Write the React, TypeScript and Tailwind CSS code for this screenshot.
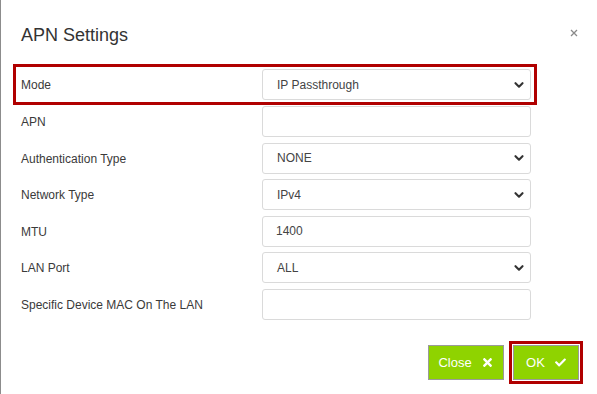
import { FaCheck, FaTimes } from "react-icons/fa";

const font = "font-['Liberation_Sans',Arial,sans-serif]";

function Chevron() {
  return (
    <svg width="10" height="6" viewBox="0 0 10 6" className="shrink-0">
      <path d="M1.5 1.2l3.5 3.5 3.5-3.5" fill="none" stroke="#333" strokeWidth="2.1" strokeLinecap="round" strokeLinejoin="round" />
    </svg>
  );
}

function SelectBox({ value }: { value: string }) {
  return (
    <div className="flex h-[31px] w-[269px] items-center justify-between rounded-[3px] border border-[#dadada] bg-white pl-[14px] pr-[6px] text-[12px] text-[#444]">
      <span>{value}</span>
      <Chevron />
    </div>
  );
}

function InputBox({ value = "" }: { value?: string }) {
  return (
    <div className="flex h-[31px] w-[269px] items-center rounded-[3px] border border-[#dadada] bg-white pl-[13px] text-[12px] text-[#444]">
      {value}
    </div>
  );
}

function Row({ label, children }: { label: string; children: React.ReactNode }) {
  return (
    <div className="flex items-center">
      <span className="w-[241px] pt-px text-[12px] text-[#3a3a3a]">{label}</span>
      {children}
    </div>
  );
}

export default function App() {
  return (
    <div className={`relative h-[394px] w-[597px] overflow-hidden border-l border-[#8c8c8c] bg-white ${font}`}>
      <div className="absolute left-[-1px] top-0 h-[38px] w-px bg-[#3a3a3a]" />

      <div className="flex h-[64px] items-start justify-between pl-[20px] pr-[19px] pt-[24px]">
        <h1 className="text-[18px] leading-[22px] text-[#333]">APN Settings</h1>
        <svg width="8" height="8" viewBox="0 0 8 8" className="mt-[5px]">
          <path d="M1 1l6 6M7 1L1 7" stroke="#8a8a8a" strokeWidth="1.3" />
        </svg>
      </div>

      <div className="flex flex-col pl-[20px]">
        <div className="-ml-[8px] w-fit border-[3px] border-[#b00000] py-[2px] pl-[5px] pr-[3px]">
          <Row label="Mode">
            <SelectBox value="IP Passthrough" />
          </Row>
        </div>

        <div className="mt-[1px] flex flex-col gap-[5.5px]">
          <Row label="APN">
            <InputBox />
          </Row>
          <Row label="Authentication Type">
            <SelectBox value="NONE" />
          </Row>
          <Row label="Network Type">
            <SelectBox value="IPv4" />
          </Row>
          <Row label="MTU">
            <InputBox value="1400" />
          </Row>
          <Row label="LAN Port">
            <SelectBox value="ALL" />
          </Row>
          <Row label="Specific Device MAC On The LAN">
            <InputBox />
          </Row>
        </div>
      </div>

      <div className="mt-[21.5px] flex items-center justify-end gap-[5px] pr-[14px]">
        <button className="flex h-[35px] w-[76px] items-center justify-center gap-[9px] border border-[#9a9a9a] bg-[#8fd300] text-[13px] text-white">
          Close <FaTimes size={13} />
        </button>
        <div className="border-[3px] border-[#b00000] p-px">
          <button className="flex h-[35px] w-[66px] items-center justify-center gap-[10px] border border-[#9a9a9a] bg-[#8fd300] text-[13px] text-white">
            OK <FaCheck size={11} />
          </button>
        </div>
      </div>
    </div>
  );
}
